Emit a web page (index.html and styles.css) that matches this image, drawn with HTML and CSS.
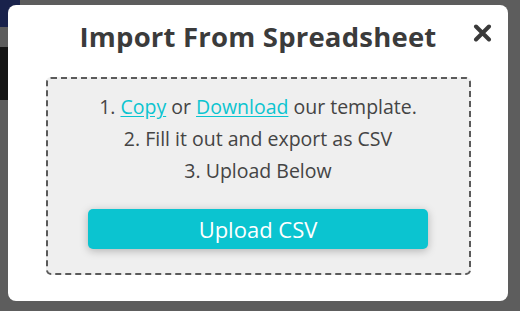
FILE: index.html
```html
<!DOCTYPE html>
<html>
<head>
<meta charset="utf-8">
<link rel="stylesheet" href="styles.css">
</head>
<body>
<div class="page">
  <div class="topbar"><div class="brand"></div></div>
  <div class="band"></div>
</div>
<div class="overlay">
  <div class="modal">
    <h1 class="title">Import From Spreadsheet</h1>
    <button class="close" aria-label="Close">
      <svg width="19" height="18" viewBox="0 0 19 18"><path d="M3 2.5 L16 15.5 M16 2.5 L3 15.5" stroke="#3a3a3a" stroke-width="4" stroke-linecap="round"/></svg>
    </button>
    <div class="dropzone">
      <p class="step">1. <a href="#" class="link">Copy</a> or <a href="#" class="link">Download</a> our template.</p>
      <p class="step">2. Fill it out and export as CSV</p>
      <p class="step">3. Upload Below</p>
      <button class="upload">Upload CSV</button>
    </div>
  </div>
</div>
</body>
</html>
```
FILE: styles.css
```css
html, body {
  margin: 0;
  padding: 0;
  width: 520px;
  height: 311px;
  overflow: hidden;
  background: #5d5d5d;
  font-family: "Open Sans", "Noto Sans", sans-serif;
}
.page {
  display: flex;
  flex-direction: column;
}
.topbar {
  height: 27px;
}
.brand {
  width: 20px;
  height: 27px;
  background: #19224b;
}
.band {
  margin-top: 20px;
  width: 200px;
  height: 53px;
  background: #151515;
}
.overlay {
  position: fixed;
  inset: 0;
}
.modal {
  position: absolute;
  left: 8px;
  top: 5px;
  width: 500px;
  height: 296px;
  box-sizing: border-box;
  background: #fff;
  border-radius: 8px;
  padding-top: 13px;
  display: flex;
  flex-direction: column;
  align-items: center;
}
.title {
  margin: 0;
  font-size: 27.5px;
  line-height: 37px;
  font-weight: 700;
  color: #3b3b3b;
  letter-spacing: 0.2px;
}
.close {
  position: absolute;
  top: 19px;
  left: 465px;
  width: 19px;
  height: 18px;
  padding: 0;
  border: 0;
  background: none;
  display: flex;
}
.dropzone {
  margin-top: 22px;
  width: 425px;
  height: 198px;
  box-sizing: border-box;
  background: #efefef;
  border: 2px dashed #5a5a5a;
  border-radius: 5px;
  padding-top: 12px;
  display: flex;
  flex-direction: column;
  align-items: center;
}
.step {
  margin: 0;
  font-size: 19.5px;
  line-height: 32px;
  color: #444;
}
.link {
  color: #0bc4d0;
  text-decoration: underline;
  text-underline-offset: 2px;
}
.upload {
  margin-top: 22px;
  width: 340px;
  height: 40px;
  border: 0;
  border-radius: 5px;
  background: #0bc4d0;
  color: #fff;
  font-family: inherit;
  font-size: 22px;
  box-shadow: 0 2px 8px rgba(0,0,0,0.25);
}
```
